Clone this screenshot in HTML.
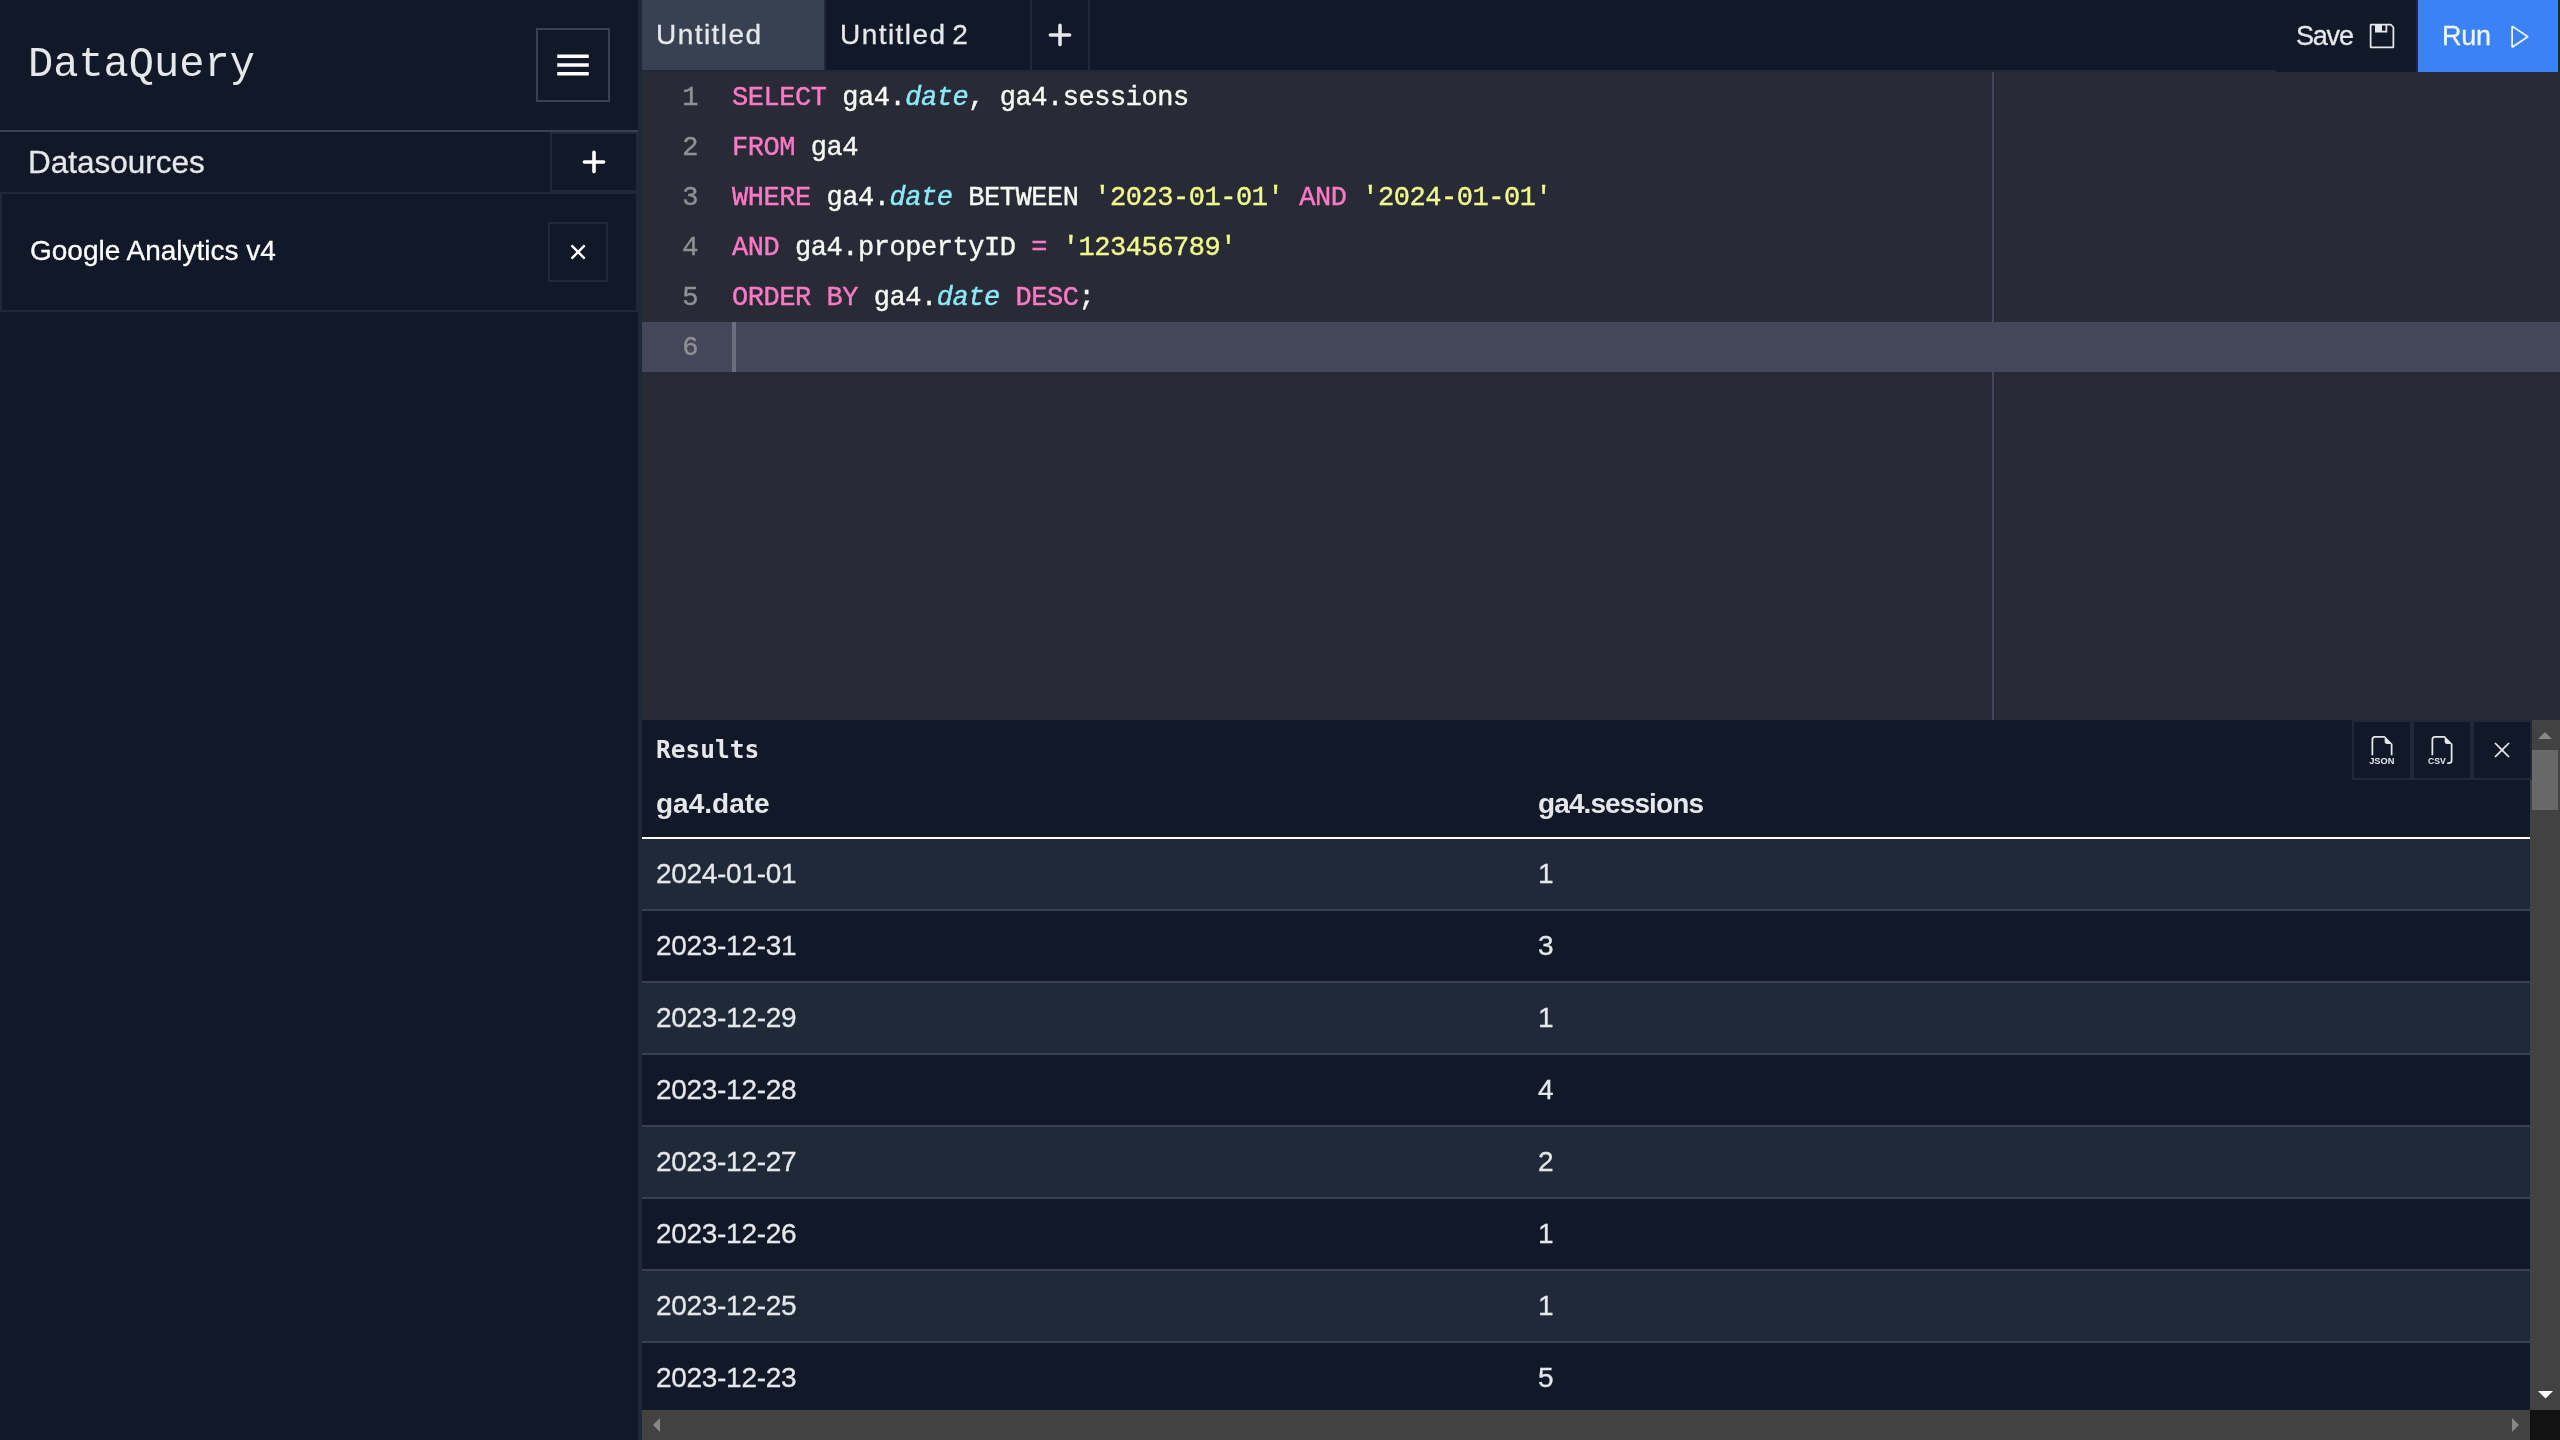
<!DOCTYPE html>
<html lang="en">
<head>
<meta charset="utf-8">
<title>DataQuery</title>
<style>
*{box-sizing:border-box;margin:0;padding:0}
html,body{width:2560px;height:1440px;overflow:hidden;background:#111827}
body{position:relative;font-family:"Liberation Sans",sans-serif;color:#e5e7eb;-webkit-font-smoothing:antialiased}
#app{position:absolute;left:0;top:0;width:2560px;height:1440px;will-change:transform}
.abs{position:absolute}
.t{position:absolute;white-space:pre;line-height:40px;height:40px;-webkit-text-stroke:0.3px currentColor}
#logo,#res-title,.th{-webkit-text-stroke:0}
/* ---------- sidebar ---------- */
#sidebar{left:0;top:0;width:642px;height:1440px;background:#111827;border-right:4px solid #1f2937}
#sb-head{left:0;top:0;width:638px;height:132px;border-bottom:2px solid #374151}
#logo{left:28px;top:45px;font-family:"Liberation Mono",monospace;font-size:42px;font-weight:normal;color:#e5e7eb}
#menu-btn{left:536px;top:28px;width:74px;height:74px;border:2px solid #374151}
#ds-row{left:0;top:132px;width:638px;height:62px;border-bottom:2px solid #1f2937}
#ds-title{left:28px;top:142px;font-size:31.5px;color:#e5e7eb}
#ds-add{left:550px;top:132px;width:88px;height:60px;border:2px solid #1f2937}
#ds-item{left:0;top:194px;width:638px;height:118px;border:2px solid #1f2937;border-top:0}
#ds-name{left:30px;top:231px;font-size:28px;color:#fff}
#ds-del{left:548px;top:222px;width:60px;height:60px;border:2px solid #1f2937}
/* ---------- tabs ---------- */
#tabbar{left:642px;top:0;width:1634px;height:72px;background:#111827;border-bottom:2px solid #1f2937}
.tab{position:absolute;top:0;height:70px;border-right:2px solid #1f2937}
#tab1{left:642px;width:184px;background:#374151}
#tab2{left:826px;width:206px}
#tab3{left:1032px;width:58px}
.tabtxt{font-size:28px;top:15px;letter-spacing:1.45px}
#save{left:2276px;top:0;width:142px;height:72px;background:#111827;border-right:2px solid #1f2937}
#run{left:2418px;top:0;width:140px;height:72px;background:#3b82f6}
/* ---------- editor ---------- */
#editor{left:642px;top:72px;width:1918px;height:648px;background:#282a36;overflow:hidden;
  font-family:"Liberation Mono",monospace;font-size:27px;letter-spacing:-0.45px;color:#f8f8f2}
#active-line{left:0;top:250px;width:1918px;height:50px;background:#44475a}
#margin{left:1350px;top:0;width:2px;height:648px;background:#44475a}
#cursor{left:90px;top:250px;width:4px;height:50px;background:#6c707e}
.ln{position:absolute;left:0;width:56px;text-align:right;height:50px;line-height:50px;color:#909194;white-space:pre;transform:translateY(1px) scaleY(1.05);transform-origin:0 33px;-webkit-text-stroke:0.4px currentColor}
.cl{position:absolute;left:90px;height:50px;line-height:50px;white-space:pre;transform:translateY(1px) scaleY(1.05);transform-origin:0 33px}
.cl,.cl span{-webkit-text-stroke:0.4px currentColor}
.k{color:#ff79c6}.s{color:#f1fa8c}.f{color:#8be9fd;font-style:italic}
/* ---------- results ---------- */
#results{left:642px;top:720px;width:1888px;height:690px;background:#111827}
#res-title{left:14px;top:10px;font-family:"DejaVu Sans Mono","Liberation Mono",monospace;font-weight:bold;font-size:24.5px;color:#e5e7eb}
#res-btns{left:1710px;top:0;width:180px;height:60px;z-index:5}
.rbtn{position:absolute;top:0;width:60px;height:60px;border:2px solid #1f2937;background:#111827}
.th{font-weight:bold;font-size:28px;top:64px;color:#e5e7eb}
#th-line{left:0;top:117px;width:1888px;height:2px;background:#fff}
.row{position:absolute;left:0;width:1888px;height:72px;border-bottom:2px solid #374151}
.row.odd{background:#1f2937}
.row .t{font-size:28px;top:15px;color:#e5e7eb;letter-spacing:-0.3px}
.c1{left:14px}.c2{left:896px}
/* ---------- scrollbars ---------- */
#vsb{left:2530px;top:720px;width:30px;height:690px;background:#424242}
#vthumb{left:2px;top:30px;width:26px;height:60px;background:#686868}
#hsb{left:642px;top:1410px;width:1888px;height:30px;background:#424242}
#corner{left:2530px;top:1410px;width:30px;height:30px;background:#121212}
svg{position:absolute;display:block;overflow:visible}
</style>
</head>
<body>
<div id="app">

<!-- ================= SIDEBAR ================= -->
<aside id="sidebar" class="abs">
  <header id="sb-head" class="abs"></header>
  <h1 id="logo" class="t">DataQuery</h1>
  <button id="menu-btn" class="abs" style="background:none"></button>
  <svg style="left:552px;top:44px" width="42" height="42" viewBox="0 0 24 24"><path d="M3 18h18v-2H3v2zm0-5h18v-2H3v2zm0-7v2h18V6H3z" fill="#fff"/></svg>

  <div id="ds-row" class="abs"></div>
  <h2 id="ds-title" class="t" style="font-weight:normal">Datasources</h2>
  <button id="ds-add" class="abs" style="background:none"></button>
  <svg style="left:582px;top:150px" width="24" height="24" viewBox="0 0 24 24"><path d="M12 2.4v19.2M2.4 12h19.2" stroke="#fff" stroke-width="3.6" stroke-linecap="round" fill="none"/></svg>

  <div id="ds-item" class="abs"></div>
  <span id="ds-name" class="t">Google Analytics v4</span>
  <button id="ds-del" class="abs" style="background:none"></button>
  <svg style="left:570px;top:244px" width="16" height="16" viewBox="0 0 16 16"><path d="M1.5 1.4l13.2 13.2M14.7 1.4L1.5 14.6" stroke="#fff" stroke-width="2.4" fill="none"/></svg>
</aside>

<!-- ================= TABS ================= -->
<nav id="tabbar" class="abs"></nav>
<div id="tab1" class="tab"><span class="t tabtxt" style="left:14px">Untitled</span></div>
<div id="tab2" class="tab"><span class="t tabtxt" style="left:14px;word-spacing:-3.5px">Untitled 2</span></div>
<div id="tab3" class="tab">
  <svg style="left:16px;top:23px" width="24" height="24" viewBox="0 0 24 24"><path d="M12 2.4v19.2M2.4 12h19.2" stroke="#e5e7eb" stroke-width="3.6" stroke-linecap="round" fill="none"/></svg>
</div>
<div id="save" class="abs"><span class="t tabtxt" style="left:20px;top:16px;font-size:27px;letter-spacing:-1.2px">Save</span>
  <svg style="left:92px;top:22px" width="28" height="28" viewBox="0 0 16 16"><path fill="#e5e7eb" fill-rule="evenodd" d="M13.353 1.146l1.5 1.5L15 3v11.5l-.5.5h-13l-.5-.5v-13l.5-.5H13l.353.146zM2 2v12h12V3.208L12.793 2H11v4H4V2H2zm6 0v3h2V2H8z"/></svg>
</div>
<div id="run" class="abs"><span class="t tabtxt" style="left:24px;top:16px;font-size:27px;letter-spacing:-0.3px;color:#eff6ff">Run</span>
  <svg style="left:88px;top:22px" width="28" height="28" viewBox="0 0 16 16"><path fill="#eff6ff" fill-rule="evenodd" d="M3.78 2L3 2.41v12l.78.42 9-6V8l-9-6zM4 13.48V3.35l7.6 5.07L4 13.48z"/></svg>
</div>

<div class="abs" style="left:2558px;top:0;width:2px;height:72px;background:#1f2937"></div>

<!-- ================= EDITOR ================= -->
<section id="editor" class="abs">
  <div id="active-line" class="abs"></div>
  <div id="margin" class="abs"></div>
  <div class="ln" style="top:0">1</div><div class="cl" style="top:0"><span class="k">SELECT</span> ga4.<span class="f">date</span>, ga4.sessions</div>
  <div class="ln" style="top:50px">2</div><div class="cl" style="top:50px"><span class="k">FROM</span> ga4</div>
  <div class="ln" style="top:100px">3</div><div class="cl" style="top:100px"><span class="k">WHERE</span> ga4.<span class="f">date</span> BETWEEN <span class="s">'2023-01-01'</span> <span class="k">AND</span> <span class="s">'2024-01-01'</span></div>
  <div class="ln" style="top:150px">4</div><div class="cl" style="top:150px"><span class="k">AND</span> ga4.propertyID <span class="k">=</span> <span class="s">'123456789'</span></div>
  <div class="ln" style="top:200px">5</div><div class="cl" style="top:200px"><span class="k">ORDER</span> <span class="k">BY</span> ga4.<span class="f">date</span> <span class="k">DESC</span>;</div>
  <div class="ln" style="top:250px">6</div>
  <div id="cursor" class="abs"></div>
</section>

<!-- ================= RESULTS ================= -->
<section id="results" class="abs">
  <h3 id="res-title" class="t">Results</h3>
  <div id="res-btns" class="abs">
    <button class="rbtn" style="left:0"></button>
    <button class="rbtn" style="left:60px"></button>
    <button class="rbtn" style="left:120px"></button>
    <svg style="left:16px;top:16px" width="28" height="28" viewBox="0 0 16 16"><path fill="#e5e7eb" d="M14 4.5V11h-1V4.5h-2A1.5 1.5 0 0 1 9.5 3V1H4a1 1 0 0 0-1 1v9H2V2a2 2 0 0 1 2-2h5.5z"/><text x="0.7" y="16" font-family="Liberation Sans, sans-serif" font-weight="bold" font-size="5.5" textLength="14.4" lengthAdjust="spacingAndGlyphs" fill="#e5e7eb">JSON</text></svg>
    <svg style="left:76px;top:16px" width="28" height="28" viewBox="0 0 16 16"><path fill="#e5e7eb" d="M14 4.5V14a2 2 0 0 1-2 2h-1v-1h1a1 1 0 0 0 1-1V4.5h-2A1.5 1.5 0 0 1 9.5 3V1H4a1 1 0 0 0-1 1v9H2V2a2 2 0 0 1 2-2h5.5z"/><text x="0" y="16" font-family="Liberation Sans, sans-serif" font-weight="bold" font-size="5.5" textLength="10.2" lengthAdjust="spacingAndGlyphs" fill="#e5e7eb">CSV</text></svg>
    <svg style="left:136px;top:16px" width="28" height="28" viewBox="0 0 16 16"><path fill="#e5e7eb" d="M8 8.707l3.646 3.647.708-.707L8.707 8l3.647-3.646-.707-.708L8 7.293 4.354 3.646l-.707.708L7.293 8l-3.646 3.646.707.708L8 8.707z"/></svg>
  </div>
  <span class="t th c1">ga4.date</span><span class="t th c2" style="letter-spacing:-0.9px">ga4.sessions</span>
  <div id="th-line" class="abs"></div>
  <div class="row odd" style="top:119px"><span class="t c1">2024-01-01</span><span class="t c2">1</span></div>
  <div class="row" style="top:191px"><span class="t c1">2023-12-31</span><span class="t c2">3</span></div>
  <div class="row odd" style="top:263px"><span class="t c1">2023-12-29</span><span class="t c2">1</span></div>
  <div class="row" style="top:335px"><span class="t c1">2023-12-28</span><span class="t c2">4</span></div>
  <div class="row odd" style="top:407px"><span class="t c1">2023-12-27</span><span class="t c2">2</span></div>
  <div class="row" style="top:479px"><span class="t c1">2023-12-26</span><span class="t c2">1</span></div>
  <div class="row odd" style="top:551px"><span class="t c1">2023-12-25</span><span class="t c2">1</span></div>
  <div class="row" style="top:623px"><span class="t c1">2023-12-23</span><span class="t c2">5</span></div>
</section>

<!-- ================= SCROLLBARS ================= -->
<div id="vsb" class="abs"><div id="vthumb" class="abs"></div>
  <svg style="left:8px;top:12px" width="14" height="7" viewBox="0 0 14 7"><path d="M0 7L7 0l7 7z" fill="#878787"/></svg>
  <svg style="left:7.5px;top:671px" width="15" height="7.5" viewBox="0 0 15 7.5"><path d="M0 0h15L7.5 7.5z" fill="#fff"/></svg>
</div>
<div id="hsb" class="abs">
  <svg style="left:11px;top:8px" width="7" height="14" viewBox="0 0 7 14"><path d="M7 0v14L0 7z" fill="#878787"/></svg>
  <svg style="left:1870px;top:8px" width="7" height="14" viewBox="0 0 7 14"><path d="M0 0l7 7-7 7z" fill="#878787"/></svg>
</div>
<div id="corner" class="abs"></div>

</div>
</body>
</html>
